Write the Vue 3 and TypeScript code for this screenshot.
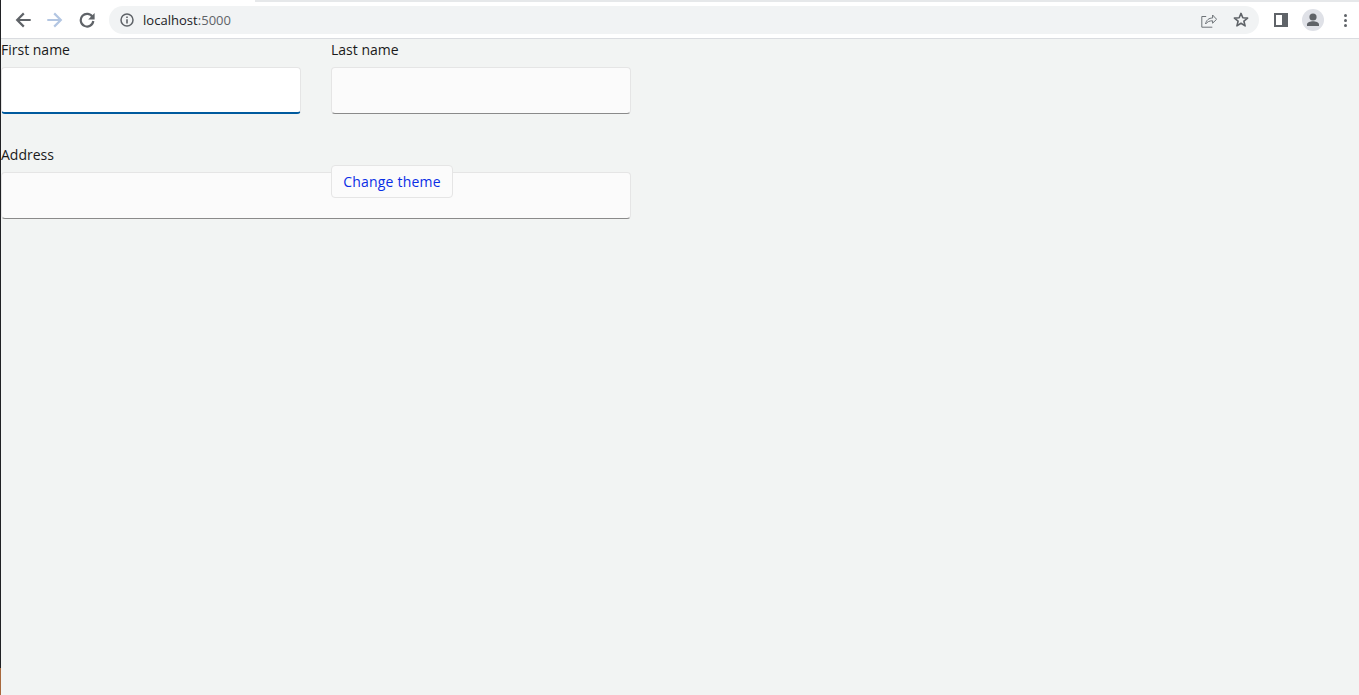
<script setup lang="ts">
const topFields = ['First name', 'Last name']
</script>

<template>
  <div class="window">
    <div class="edge"><div class="edge-dark"></div><div class="edge-warm"></div></div>
    <div class="main">
      <div class="tabstrip"><div class="tabstrip-rest"></div></div>
      <header class="toolbar">
        <div class="nav">
          <svg width="16" height="16" viewBox="0 0 16 16" class="ic"><path d="M15.7 8H2.800M8.800 1.400 2.200 8l6.600 6.600" fill="none" stroke="#5f6368" stroke-width="2.200"/></svg>
          <svg width="16" height="16" viewBox="0 0 16 16" class="ic"><path d="M.3 8h12.900M7.200 1.400 13.800 8l-6.600 6.600" fill="none" stroke="#b3c6e2" stroke-width="2.200"/></svg>
          <svg width="16" height="16" viewBox="0 0 16 16" class="ic"><path d="M13.600 5.200A6.300 6.300 0 1 0 14.300 9" fill="none" stroke="#5f6368" stroke-width="2.200"/><path d="M15.600 1v6.400H9.200z" fill="#5f6368"/></svg>
        </div>
        <div class="omnibox">
          <svg width="14" height="14" viewBox="0 0 14 14" class="info"><circle cx="7" cy="7" r="6" fill="none" stroke="#5f6368" stroke-width="1.500"/><path d="M7 6.200v4.200M7 3.400v1.700" stroke="#5f6368" stroke-width="1.600"/></svg>
          <span class="url">localhost<span class="port">:5000</span></span>
          <span class="spacer"></span>
          <svg width="16" height="16" viewBox="0 0 16 16" class="share"><path d="M.8 4.500v10.700h10.500" fill="none" stroke="#6d7277" stroke-width="1"/><path d="M.8 4.500h4.400M4.600 12c.6-4 3.300-6 7-6V3l4 4.300-4 3.900V8.800c-3 0-5.200.8-7 3.200z" fill="none" stroke="#6d7277" stroke-width="1" stroke-linejoin="round"/></svg>
          <svg width="16" height="16" viewBox="0 0 16 16" class="star"><path d="M8 1.400 9.800 5.800l4.800.3-3.700 3.100 1.200 4.700L8 11.300l-4.100 2.600 1.200-4.700-3.700-3.100 4.800-.3z" fill="none" stroke="#5f6368" stroke-width="1.600" stroke-linejoin="round"/></svg>
        </div>
        <div class="actions">
          <span class="panel"></span>
          <span class="avatar">
            <svg width="22" height="22" viewBox="0 0 22 22"><circle cx="11" cy="8" r="3.600" fill="#5f6368"/><path d="M5 17v-1.500c0-2 3.500-3.200 6-3.200s6 1.200 6 3.200V17z" fill="#5f6368"/></svg>
          </span>
          <span class="kebab"><i></i><i></i><i></i></span>
        </div>
      </header>
      <main class="page">
        <form class="form" @submit.prevent>
          <div class="names">
            <label v-for="(name, index) in topFields" :key="name" class="field">
              <span class="label">{{ name }}</span>
              <span class="input" :class="{ focused: index === 0 }"></span>
            </label>
          </div>
          <label class="field">
            <span class="label">Address</span>
            <span class="input"></span>
          </label>
          <button type="button" class="theme">Change theme</button>
        </form>
      </main>
    </div>
  </div>
</template>

<style>
html, body { margin: 0; height: 100%; overflow: hidden; background: #f2f4f3; }
#app { height: 100%; }
</style>

<style scoped>
.window { display: flex; height: 695px; width: 1359px; font-family: "Open Sans", "Noto Sans", sans-serif; color: #1a1a1a; }
.edge { width: 1px; display: flex; flex-direction: column; flex: none; }
.edge-dark { height: 668px; background: #202124; }
.edge-warm { flex: 1; background: #a8683c; }
.main { flex: 1; display: flex; flex-direction: column; min-width: 0; }
.tabstrip { height: 2px; background: #fff; display: flex; justify-content: flex-end; }
.tabstrip-rest { width: 1104px; background: #e6e8ea; }
.toolbar { height: 36px; background: #fff; border-bottom: 1px solid #dadce0; display: flex; align-items: center; flex: none; }
.nav { display: flex; gap: 16px; padding-left: 14px; width: 108px; box-sizing: border-box; }
.ic { display: block; }
.omnibox { width: 1150px; height: 28px; background: #f1f3f4; border-radius: 14px; display: flex; align-items: center; padding: 0 10px 0 11px; box-sizing: border-box; }
.info { display: block; margin-right: 9px; }
.url { font-size: 13px; color: #202124; letter-spacing: .03px; }
.port { color: #5f6368; }
.spacer { flex: 1; }
.share { margin-right: 16px; }
.actions { display: flex; align-items: center; padding-left: 15px; }
.panel { width: 14px; height: 14px; box-sizing: border-box; border: 2px solid #5f6368; border-right-width: 6px; background: #fff; }
.avatar { width: 22px; height: 22px; border-radius: 50%; background: #dfe1e7; margin-left: 14px; overflow: hidden; }
.avatar svg { display: block; }
.kebab { display: flex; flex-direction: column; gap: 2px; margin-left: 20px; }
.kebab i { display: block; width: 3px; height: 3px; border-radius: 50%; background: #5f6368; }
.page { flex: 1; background: #f2f4f3; }
.form { position: relative; width: 630px; display: flex; flex-direction: column; gap: 31px; padding-top: 1px; }
.names { display: flex; gap: 30px; }
.field { display: flex; flex-direction: column; flex: 1; gap: 7px; }
.label { font-size: 14px; line-height: 20px; height: 20px; }
.input { display: block; height: 47px; box-sizing: border-box; background: #fbfbfb; border: 1px solid #e5e5e5; border-bottom: 1px solid #8a8a8a; border-radius: 4px; }
.input.focused { background: #fff; border-bottom: 2px solid #005a9e; }
.theme { position: absolute; left: 330px; top: 126px; width: 122px; height: 33px; box-sizing: border-box; background: #fbfbfb; border: 1px solid #e5e5e5; border-radius: 4px; color: #0a2ee6; font: 14px "Open Sans", "Noto Sans", sans-serif; letter-spacing: .2px; padding: 0; }
</style>
